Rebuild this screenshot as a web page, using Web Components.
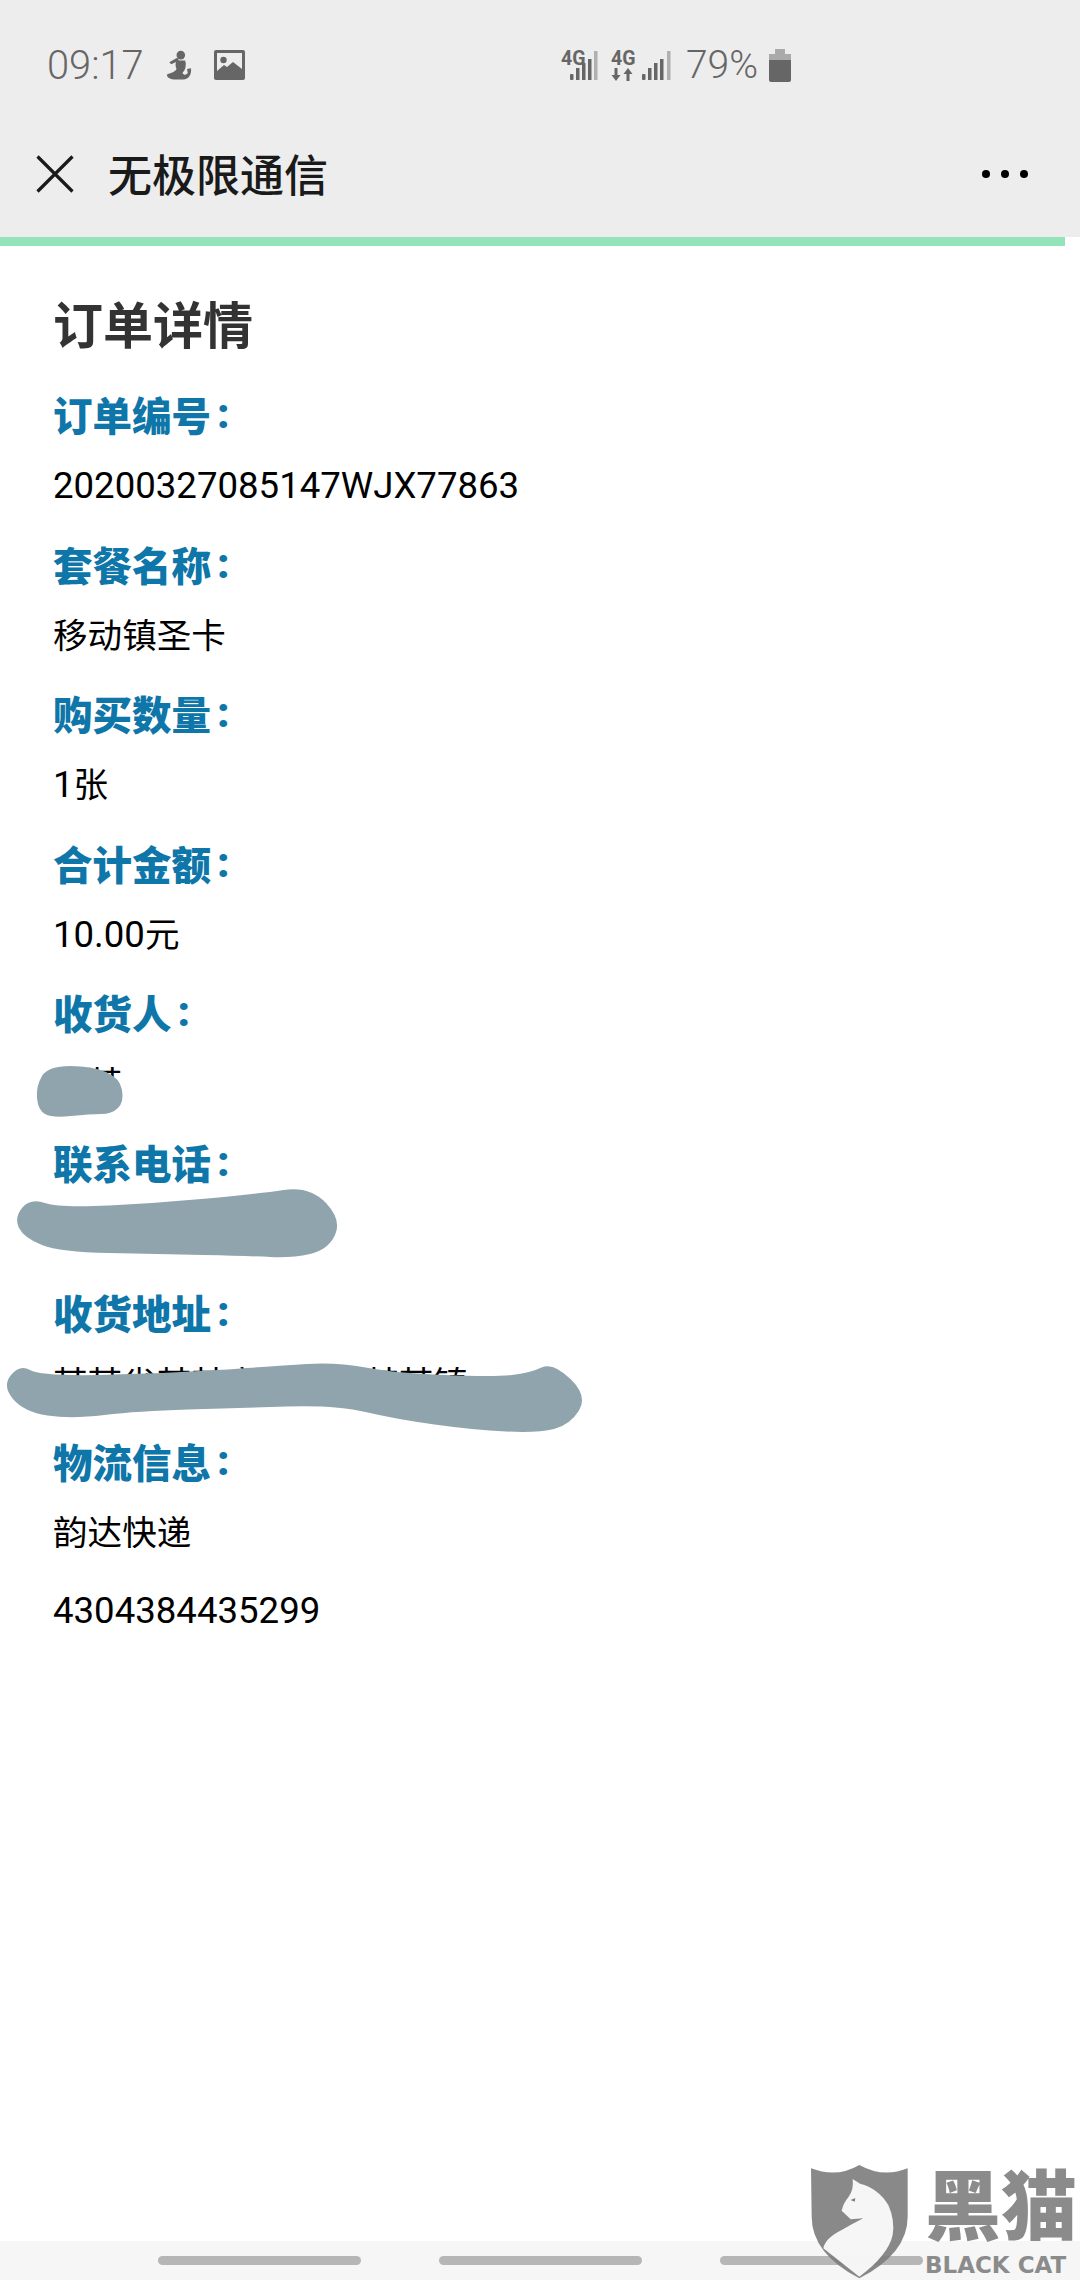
<!doctype html>
<html>
<head>
<meta charset="utf-8">
<title>订单详情</title>
<style>
    html, body { margin: 0; padding: 0; }
    body {
        position: relative;
        width: 1080px;
        height: 2280px;
        overflow: hidden;
        display: flex;
        flex-direction: column;
        background: #fff;
        font-family: Roboto, "Noto Sans CJK SC", sans-serif;
    }
</style>
</head>
<body>
    <x-status-bar></x-status-bar>
    <x-title-bar>无极限通信</x-title-bar>
    <x-progress></x-progress>

    <x-order title="订单详情">
        <x-field label="订单编号">20200327085147WJX77863</x-field>
        <x-field label="套餐名称"><span class="c">移动镇圣卡</span></x-field>
        <x-field label="购买数量">1<span class="c">张</span></x-field>
        <x-field label="合计金额">10.00<span class="c">元</span></x-field>
        <x-field label="收货人"><span class="c">某某</span></x-field>
        <x-field label="联系电话">***********</x-field>
        <x-field label="收货地址"><span class="c">某某省某某市某某县某某镇</span></x-field>
        <x-field label="物流信息" extra="4304384435299"><span class="c">韵达快递</span></x-field>
    </x-order>

    <x-nav-bar></x-nav-bar>

    <!-- scribbles over the private fields, points are in page px -->
    <x-blob points="36,1086 48,1066 92,1066 120,1078 124,1102 112,1114 90,1114 52,1118 38,1110"></x-blob>
    <x-blob points="14,1218 30,1198 60,1208 158,1203 257,1194 310,1186 342,1220 328,1250 292,1258 249,1256 158,1254 60,1252 24,1238"></x-blob>
    <x-blob points="2,1386 20,1364 40,1376 158,1374 277,1366 336,1362 395,1373 494,1377 530,1373 553,1362 588,1396 570,1425 538,1433 474,1430 395,1419 336,1405 237,1408 138,1411 71,1419 24,1412"></x-blob>

    <x-watermark></x-watermark>

<script>
    const CJK = '"Noto Sans CJK SC", "Noto Sans CJK TC", sans-serif';

    customElements.define('x-status-bar', class extends HTMLElement {
        constructor() {
            super();
            this.attachShadow({ mode: 'open' }).innerHTML = `
            <style>
                :host {
                    display: flex;
                    justify-content: space-between;
                    align-items: center;
                    height: 130px;
                    padding: 0 289px 0 47px;
                    background: #ededed;
                    color: #666;
                    font: 300 38.600px Roboto, sans-serif;
                }
                .group { display: flex; align-items: center; }
                svg { display: block; }
                .time { width: 118px; font-size: 39.800px; }
                .pct { margin: 0 11px 0 15px; font-size: 39px; }
                .sim { font: 700 19.500px Roboto, sans-serif; fill: #666; }
                .net { margin-top: -6px; }
            </style>
            <div class="group">
                <span class="time">09:17</span>
                <svg width="28" height="30" viewBox="15 15 85 90">
                    <circle cx="63" cy="30" r="13" fill="#666"/>
                    <path d="M52 38L28 52L34 58L58 46Z" fill="#666"/>
                    <path d="M50 46L76 46C80 55 78 68 74 76L68 84C72 92 80 90 84 84L82 72L94 70C96 88 88 104 70 104L42 104C26 102 18 94 22 88C34 84 46 80 50 72C46 62 46 54 50 46Z" fill="#666"/>
                </svg>
                <svg style="margin-left:21px" width="31" height="30" viewBox="0 0 31 30">
                    <rect width="31" height="30" rx="2" fill="#666"/>
                    <rect x="3" y="3" width="25" height="21" fill="#ededed"/>
                    <circle cx="9.500" cy="10" r="3.200" fill="#666"/>
                    <path d="M3 21l7-6 3 2 6-5 9 7v11H3z" fill="#666"/>
                </svg>
            </div>
            <div class="group">
                <svg class="net" width="37" height="39" viewBox="0 -6 37 39">
                    <text class="sim" x="0" y="16">4G</text>
                    <rect x="9" y="25" width="3.500" height="6" rx="1" fill="#666"/>
                    <rect x="15" y="19" width="3.500" height="12" fill="#666"/>
                    <rect x="21" y="14" width="3.500" height="17" fill="#666"/>
                    <rect x="27" y="10" width="3.500" height="21" fill="#666"/>
                    <rect x="33" y="2" width="3.500" height="29" fill="#b0b0b0"/>
                </svg>
                <svg class="net" style="margin-left:13px" width="60" height="39" viewBox="0 -6 60 39">
                    <text class="sim" x="0" y="16">4G</text>
                    <path d="M5 19v8" stroke="#666" stroke-width="3"/>
                    <path d="M0.500 26h9l-4.500 6z" fill="#666"/>
                    <path d="M17 24v8" stroke="#666" stroke-width="3"/>
                    <path d="M12.500 25h9l-4.500-6z" fill="#666"/>
                    <rect x="31" y="25" width="3.500" height="6" rx="1" fill="#666"/>
                    <rect x="37" y="19" width="3.500" height="12" fill="#666"/>
                    <rect x="43" y="14" width="3.500" height="17" fill="#666"/>
                    <rect x="49" y="10" width="3.500" height="21" fill="#666"/>
                    <rect x="56" y="2" width="3.500" height="29" fill="#b0b0b0"/>
                </svg>
                <span class="pct">79%</span>
                <svg width="22" height="33" viewBox="0 0 22 33">
                    <path d="M6 0h10v5h6v6H0V5h6z" fill="#aaa"/>
                    <path d="M0 11h22v20a2 2 0 0 1-2 2H2a2 2 0 0 1-2-2z" fill="#666"/>
                </svg>
            </div>`;
        }
    });

    customElements.define('x-title-bar', class extends HTMLElement {
        constructor() {
            super();
            this.attachShadow({ mode: 'open' }).innerHTML = `
            <style>
                :host {
                    display: flex;
                    align-items: center;
                    height: 88px;
                    padding: 0 52px 19px 36px;
                    background: #ededed;
                    color: #1a1a1a;
                }
                svg { display: block; }
                .name { flex: 1; margin-left: 34px; margin-top: -3px; font: 500 44px ${CJK}; }
                .more { display: flex; gap: 11px; }
                .more i { width: 8px; height: 8px; border-radius: 50%; background: #000; }
            </style>
            <svg width="38" height="38" viewBox="0 0 38 38">
                <path d="M1.500 1.500l35 35M36.500 1.500l-35 35" stroke="#1a1a1a" stroke-width="3.200" fill="none"/>
            </svg>
            <span class="name"><slot></slot></span>
            <div class="more"><i></i><i></i><i></i></div>`;
        }
    });

    customElements.define('x-progress', class extends HTMLElement {
        constructor() {
            super();
            this.attachShadow({ mode: 'open' }).innerHTML = `
            <style>
                :host { display: block; height: 9px; background: #fff; }
                div { width: 1065px; height: 100%; background: #93e4b9; }
            </style>
            <div></div>`;
        }
    });

    customElements.define('x-order', class extends HTMLElement {
        constructor() {
            super();
            this.attachShadow({ mode: 'open' }).innerHTML = `
            <style>
                :host { display: block; flex: 1; padding: 46px 0 0 53px; }
                h1 {
                    margin: 0 0 37px;
                    height: 60px;
                    font: 700 50px/60px ${CJK};
                    color: #333;
                }
            </style>
            <h1></h1>
            <slot></slot>`;
            this.shadowRoot.querySelector('h1').textContent = this.getAttribute('title');
        }
    });

    customElements.define('x-field', class extends HTMLElement {
        constructor() {
            super();
            this.attachShadow({ mode: 'open' }).innerHTML = `
            <style>
                :host { display: block; height: 149.600px; }
                .label {
                    display: flex;
                    height: 50px;
                    font: 900 39.500px/50px ${CJK};
                    color: #0e76a8;
                }
                .label b { margin-left: 6px; font: 900 42px/50px Roboto, sans-serif; }
                .value, .extra {
                    height: 50px;
                    margin-top: 22px;
                    font: 400 36.600px/50px Roboto, ${CJK};
                    color: #000;
                }
                .extra { margin-top: 28px; }
                ::slotted(.c) { font-size: 34.600px; }
            </style>
            <div class="label"><span class="t"></span><b>:</b></div>
            <div class="value"><slot></slot></div>`;
            this.shadowRoot.querySelector('.t').textContent = this.getAttribute('label');
            if (this.hasAttribute('extra')) {
                const extra = document.createElement('div');
                extra.className = 'extra';
                extra.textContent = this.getAttribute('extra');
                this.shadowRoot.appendChild(extra);
            }
        }
    });

    customElements.define('x-nav-bar', class extends HTMLElement {
        constructor() {
            super();
            this.attachShadow({ mode: 'open' }).innerHTML = `
            <style>
                :host {
                    display: flex;
                    justify-content: center;
                    gap: 78px;
                    height: 39px;
                    padding-top: 15px;
                    box-sizing: border-box;
                    background: #f6f6f6;
                }
                i { width: 203px; height: 9px; border-radius: 5px; background: #b6b6b6; }
            </style>
            <i></i><i></i><i></i>`;
        }
    });

    // closed smooth outline through the points, midpoints as curve ends
    customElements.define('x-blob', class extends HTMLElement {
        constructor() {
            super();
            const pts = this.getAttribute('points').trim().split(/\s+/).map(p => p.split(',').map(Number));
            const mid = (a, b) => [(a[0] + b[0]) / 2, (a[1] + b[1]) / 2];
            let d = 'M' + mid(pts[pts.length - 1], pts[0]).join(' ');
            pts.forEach((p, i) => {
                d += `Q${p.join(' ')} ${mid(p, pts[(i + 1) % pts.length]).join(' ')}`;
            });
            this.attachShadow({ mode: 'open' }).innerHTML = `
            <style>
                :host { position: absolute; left: 0; top: 0; pointer-events: none; }
                svg { display: block; }
            </style>
            <svg width="1080" height="2280" viewBox="0 0 1080 2280"><path d="${d}" fill="#90a4ae"/></svg>`;
        }
    });

    customElements.define('x-watermark', class extends HTMLElement {
        constructor() {
            super();
            this.attachShadow({ mode: 'open' }).innerHTML = `
            <style>
                :host {
                    position: absolute;
                    left: 810px;
                    top: 2164px;
                    display: flex;
                    gap: 15px;
                    color: #8b8b8b;
                }
                svg { display: block; }
                .words { display: flex; flex-direction: column; width: 154px; }
                .cn {
                    height: 88px;
                    font: 900 76px/88px Roboto, "Noto Sans CJK SC", sans-serif;
                    white-space: nowrap;
                }
                .en {
                    font: 700 23px/27px "DejaVu Sans", sans-serif;
                    white-space: nowrap;
                }
            </style>
            <svg width="100" height="115" viewBox="150 72 300 345">
                <path d="M153 85Q230 115 298 75Q370 115 443 85V230Q443 340 298 415Q155 340 155 230Z" fill="#7c7c7c" fill-opacity=".9"/>
                <path d="M278 117L300 131Q355 145 385 195Q405 240 398 285Q385 345 298 410L190 325Q195 295 245 270Q280 250 310 235L272 238L245 212Q250 190 265 172Q282 150 278 117Z" fill="#fff" fill-opacity=".92"/>
                <path d="M272 180l14-6-2 11z" fill="#7c7c7c"/>
            </svg>
            <div class="words">
                <span class="cn">黑猫</span>
                <span class="en">BLACK CAT</span>
            </div>`;
        }
    });
</script>
</body>
</html>
